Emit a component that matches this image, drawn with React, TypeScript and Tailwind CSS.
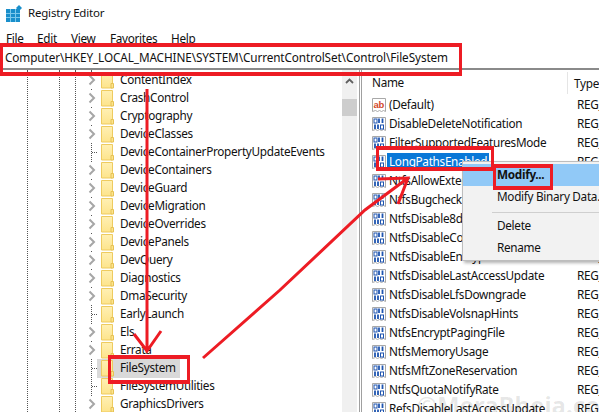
import { ReactNode } from "react";

const TREE: { name: string; chevron: boolean; selected?: boolean }[] = [
  { name: "ContentIndex", chevron: true },
  { name: "CrashControl", chevron: true },
  { name: "Cryptography", chevron: true },
  { name: "DeviceClasses", chevron: true },
  { name: "DeviceContainerPropertyUpdateEvents", chevron: false },
  { name: "DeviceContainers", chevron: true },
  { name: "DeviceGuard", chevron: true },
  { name: "DeviceMigration", chevron: true },
  { name: "DeviceOverrides", chevron: true },
  { name: "DevicePanels", chevron: true },
  { name: "DevQuery", chevron: true },
  { name: "Diagnostics", chevron: true },
  { name: "DmaSecurity", chevron: true },
  { name: "EarlyLaunch", chevron: false },
  { name: "Els", chevron: true },
  { name: "Errata", chevron: true },
  { name: "FileSystem", chevron: false, selected: true },
  { name: "FileSystemUtilities", chevron: false },
  { name: "GraphicsDrivers", chevron: true },
];

const VALUES = [
  "DisableDeleteNotification",
  "FilterSupportedFeaturesMode",
  "LongPathsEnabled",
  "NtfsAllowExtendedCharacterIn8dot3Name",
  "NtfsBugcheckOnCorrupt",
  "NtfsDisable8dot3NameCreation",
  "NtfsDisableCompression",
  "NtfsDisableEncryption",
  "NtfsDisableLastAccessUpdate",
  "NtfsDisableLfsDowngrade",
  "NtfsDisableVolsnapHints",
  "NtfsEncryptPagingFile",
  "NtfsMemoryUsage",
  "NtfsMftZoneReservation",
  "NtfsQuotaNotifyRate",
  "RefsDisableLastAccessUpdate",
];

function AppIcon() {
  return (
    <svg width="16" height="17" viewBox="0 0 16 17" className="shrink-0">
      <rect x="0" y="4" width="14" height="13" fill="#1a8fcb" />
      <path d="M4.500 4v13M9.500 4v13M0 8.500h14M0 12.500h14" stroke="#7cc9ec" strokeWidth="1" />
      <path d="M13 0l3 3-3 3-3-3z" fill="#1a8fcb" />
    </svg>
  );
}

function Folder() {
  return (
    <svg width="13" height="17" viewBox="0 0 13 17" className="shrink-0">
      <defs>
        <linearGradient id="fold" x1="0" y1="0" x2="0" y2="1">
          <stop offset="0" stopColor="#fff0b4" />
          <stop offset="1" stopColor="#fde48c" />
        </linearGradient>
      </defs>
      <path d="M.5.500h11v15.500H.5z" fill="url(#fold)" stroke="#eecb5f" />
      <path d="M10 11.500h2.500v4.500H10z" fill="#fde48c" stroke="#e6c255" />
    </svg>
  );
}

function Chevron() {
  return (
    <svg width="8" height="12" viewBox="0 0 8 12" className="shrink-0">
      <path d="M1.500 1.500L6 6l-4.500 4.500" fill="none" stroke="#a6a6a6" strokeWidth="2" />
    </svg>
  );
}

function DwordIcon() {
  return (
    <svg width="16" height="16" viewBox="0 0 16 16" className="shrink-0">
      <path d="M1.500 1.500h13v13l-2-1-2 1-2-1-2 1-2-1-3 1z" fill="#fff" stroke="#a8a8a8" />
      <rect x="3" y="3" width="3" height="4" fill="none" stroke="#1f55b0" />
      <path d="M8 2.500v4.500M11.500 2.500v4.500" stroke="#1f55b0" strokeWidth="1.800" />
      <path d="M4 8.500v4.500M7 8.500v4.500" stroke="#1f55b0" strokeWidth="1.800" />
      <rect x="9.500" y="9" width="3" height="4" fill="none" stroke="#1f55b0" />
    </svg>
  );
}

function StringIcon() {
  return (
    <svg width="16" height="16" viewBox="0 0 16 16" className="shrink-0">
      <path d="M1.500 1.500h13v13l-2-1-2 1-2-1-2 1-2-1-3 1z" fill="#fff" stroke="#a8a8a8" />
      <text x="2.500" y="11" fontSize="9.500" fontWeight="700" fill="#d2492a" fontFamily="Liberation Sans, sans-serif">ab</text>
    </svg>
  );
}

function Box({ className }: { className: string }) {
  return <div className={`absolute border-x-[3px] border-y-[4px] border-[#ed1c24] ${className}`} />;
}

function Row({ children }: { children: ReactNode }) {
  return <div className="flex h-[19px] items-center whitespace-nowrap pl-[9px]">{children}</div>;
}

export default function App() {
  return (
    <div className="relative h-[412px] w-[599px] overflow-hidden bg-white text-[11.75px] leading-none tracking-[-0.3px] text-[#111] [font-family:'Noto_Sans',sans-serif]">
      <div className="flex h-[29px] items-center gap-[6px] pl-[6px] pb-[3px] text-[11.5px] tracking-[-0.2px]">
        <AppIcon />
        <span>Registry Editor</span>
      </div>
      <div className="flex h-[19px] items-center pl-[6px]">
        <span className="w-[31px]">File</span>
        <span className="w-[34px]">Edit</span>
        <span className="w-[39px]">View</span>
        <span className="w-[61px]">Favorites</span>
        <span>Help</span>
      </div>
      <div className="flex h-[22px] items-center border-b-2 border-[#8a8a8a] pl-[5px] whitespace-nowrap tracking-[-0.1px]">
        Computer\HKEY_LOCAL_MACHINE\SYSTEM\CurrentControlSet\Control\FileSystem
      </div>

      <div className="flex h-[342px]">
        <div className="relative w-[342px] pt-[1px]">
          <div className="absolute top-0 bottom-0 left-[27px] border-l border-dotted border-[#555]" />
          <div className="absolute top-0 bottom-0 left-[59px] border-l border-dotted border-[#555]" />
          <div className="absolute top-0 bottom-0 left-[75px] border-l border-dotted border-[#555]" />
          <div className="absolute top-0 bottom-0 left-[91px] border-l border-dotted border-[#555]" />
          {TREE.map((t) => (
            <div key={t.name} className="relative flex h-[18px] items-center whitespace-nowrap pl-[86px]">
              <div className="flex h-[15px] w-[11px] shrink-0 items-center justify-center">
                {t.chevron ? (
                  <div className="flex h-[15px] w-[11px] items-center justify-center bg-white">
                    <Chevron />
                  </div>
                ) : (
                  <span className="ml-[6px] w-[5px] border-t border-dotted border-[#555]" />
                )}
              </div>
              <div className={`flex h-[19px] items-center pl-[4px] pr-[4px] ${t.selected ? "bg-[#d9d9d9]" : ""}`}>
                <Folder />
                <span className="ml-[6px]">{t.name}</span>
              </div>
            </div>
          ))}
        </div>
        <div className="flex w-[15px] flex-col items-center bg-[#f0f0f0] pt-[8px]">
          <svg width="9" height="6" viewBox="0 0 9 6">
            <path d="M1 5l3.500-3.500L8 5" fill="none" stroke="#606060" strokeWidth="1.800" />
          </svg>
          <div className="mt-[15px] h-[17px] w-full bg-[#cdcdcd]" />
        </div>
        <div className="ml-[2px] w-[3px] border-x border-[#a0a0a0]" />
        <div className="min-w-0 flex-1">
          <div className="flex h-[25px] items-center pl-[10px]">
            <span className="w-[198px]">Name</span>
            <span className="border-l border-[#e5e5e5] pl-[6px] leading-[22px]">Type</span>
          </div>
          <Row>
            <StringIcon />
            <span className="w-[190px] shrink-0 px-[2px]">(Default)</span>
            <span>REG_SZ</span>
          </Row>
          {VALUES.map((v) => (
            <Row key={v}>
              <DwordIcon />
              <div className="w-[190px] shrink-0 overflow-hidden">
                <span className={`block w-fit px-[2px] py-[3px] ${v === "LongPathsEnabled" ? "bg-[#0a78d7] text-white" : ""}`}>
                  {v}
                </span>
              </div>
              <span>REG_DWORD</span>
            </Row>
          ))}
        </div>
      </div>

      {/* context menu */}
      <div className="absolute top-[161px] left-[462px] h-[100px] w-[150px] border border-[#bdbdbd] bg-[#f2f2f2] pt-[2px] whitespace-nowrap shadow-[2px_2px_3px_rgba(0,0,0,0.3)]">
        <div className="flex h-[22px] items-center bg-[#91c9f7] pl-[34px] font-bold">Modify...</div>
        <div className="flex h-[22px] items-center pl-[34px]">Modify Binary Data...</div>
        <div className="ml-[29px] mt-[4px] border-t border-[#cfcfcf]" />
        <div className="flex h-[26px] items-center pl-[34px]">Delete</div>
        <div className="flex h-[18px] items-center pl-[34px]">Rename</div>
      </div>

      {/* watermark on the screenshot */}
      <div className="pointer-events-none absolute top-[393px] left-[417px] text-[24px] font-bold tracking-normal whitespace-nowrap text-black/[0.1]">
        ©MeraBheia.com
      </div>

      {/* annotations drawn on the screenshot */}
      <Box className="top-[43px] left-0 h-[33px] w-[462px]" />
      <Box className="top-[146px] left-[376px] h-[25px] w-[118px]" />
      <Box className="top-[164px] left-[493px] h-[26px] w-[60px]" />
      <Box className="top-[355px] left-[108px] h-[29px] w-[82px]" />
      <svg width="599" height="412" viewBox="0 0 599 412" className="pointer-events-none absolute inset-0">
        <g fill="none" stroke="#ed1c24" strokeWidth="3">
          <path d="M147 89L147 351M134 334L147 351L161 331" />
          <path d="M203 358L280 290L365 210L408 178M378 179L408 178L398 204" />
        </g>
      </svg>
    </div>
  );
}
